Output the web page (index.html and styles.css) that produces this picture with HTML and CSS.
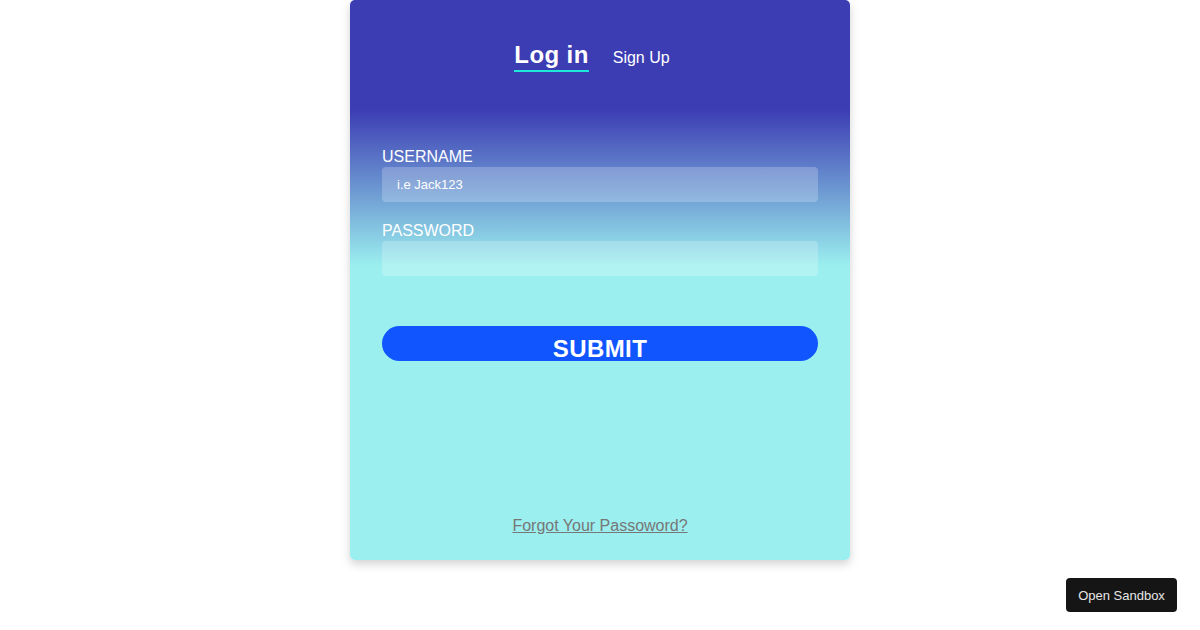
FILE: index.html
```html
<!DOCTYPE html>
<html>
<head>
<meta charset="utf-8">
<link rel="stylesheet" href="styles.css">
</head>
<body>
<div class="page">
  <div class="card">
    <div class="tabs">
      <a class="tab active">Log in</a>
      <a class="tab">Sign Up</a>
    </div>
    <form class="form">
      <label class="label">USERNAME</label>
      <input class="input" type="text" placeholder="i.e Jack123">
      <label class="label label-pass">PASSWORD</label>
      <input class="input" type="password">
      <button class="submit" type="button">SUBMIT</button>
    </form>
    <div class="footer">
      <a class="forgot">Forgot Your Passoword?</a>
    </div>
  </div>
  <button class="sandbox" type="button">Open Sandbox</button>
</div>
</body>
</html>
```

FILE: styles.css
```css
html, body {
  margin: 0;
  padding: 0;
  background: #ffffff;
  font-family: "Liberation Sans", Arial, sans-serif;
}

.page {
  width: 1200px;
  height: 630px;
  position: relative;
}

.card {
  width: 500px;
  height: 560px;
  margin: 0 auto;
  box-sizing: border-box;
  border-radius: 5px;
  background: linear-gradient(to bottom, #3c3cb3 0%, #3c3cb3 19.5%, #9befef 47.5%, #9befef 100%);
  box-shadow: 0 4px 10px rgba(0, 0, 0, 0.18);
  display: flex;
  flex-direction: column;
  padding: 0 32px;
  color: #ffffff;
}

.tabs {
  display: flex;
  justify-content: center;
  align-items: flex-end;
  gap: 24px;
  padding-top: 38px;
  padding-right: 16px;
  height: 34px;
}

.tab {
  color: #ffffff;
  font-size: 16px;
  line-height: 20px;
  padding-bottom: 4px;
  cursor: pointer;
}

.tab.active {
  font-size: 24px;
  font-weight: bold;
  letter-spacing: 0.4px;
  line-height: 28px;
  padding-bottom: 1px;
  border-bottom: 2px solid #1de9d9;
}

.form {
  display: flex;
  flex-direction: column;
  padding-top: 76px;
}

.label {
  display: block;
  font-size: 16px;
  line-height: 18px;
  height: 19px;
  color: #ffffff;
}

.label-pass {
  margin-top: 20px;
}

.input {
  display: block;
  box-sizing: border-box;
  width: 100%;
  height: 35px;
  border: none;
  border-radius: 4px;
  background: rgba(255, 255, 255, 0.22);
  padding: 0 15px;
  font-family: "Liberation Sans", Arial, sans-serif;
  font-size: 13px;
  color: #ffffff;
  outline: none;
}

.input::placeholder {
  color: #ffffff;
}

.submit {
  display: block;
  box-sizing: border-box;
  width: 100%;
  height: 35px;
  margin-top: 50px;
  border: none;
  border-radius: 18px;
  background: #1155ff;
  color: #ffffff;
  font-family: "Liberation Sans", Arial, sans-serif;
  font-size: 24px;
  font-weight: bold;
  letter-spacing: 0.4px;
  line-height: 24px;
  padding: 11px 0 0 0;
  text-align: center;
  cursor: pointer;
}

.footer {
  margin-top: auto;
  padding-bottom: 25px;
  text-align: center;
}

.forgot {
  font-size: 16px;
  line-height: 18px;
  color: #777777;
  text-decoration: underline;
  cursor: pointer;
}

.sandbox {
  position: absolute;
  left: 1066px;
  top: 578px;
  width: 111px;
  height: 34px;
  border: none;
  border-radius: 4px;
  background: #151515;
  color: #e6e6e6;
  font-family: "Liberation Sans", Arial, sans-serif;
  font-size: 13px;
  padding: 0;
  cursor: pointer;
}
```
